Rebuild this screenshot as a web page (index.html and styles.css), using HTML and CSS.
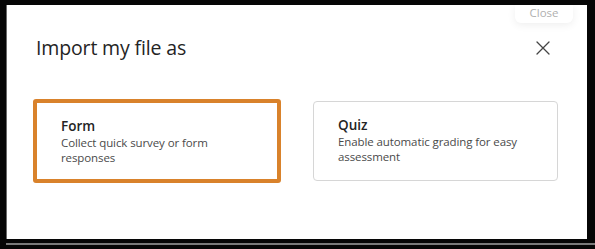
FILE: index.html
```html
<!DOCTYPE html>
<html lang="en">
<head>
<meta charset="utf-8">
<title>Import my file as</title>
<link rel="stylesheet" href="styles.css">
</head>
<body>
<div class="screen">
  <div class="dialog">
    <div class="tooltip">Close</div>
    <div class="header">
      <h1 class="title">Import my file as</h1>
      <button class="close" aria-label="Close">
        <svg width="14" height="14" viewBox="0 0 14 14" aria-hidden="true">
          <path d="M1 1 L13 13 M13 1 L1 13" stroke="#454545" stroke-width="1.3" fill="none" stroke-linecap="round"/>
        </svg>
      </button>
    </div>
    <div class="cards">
      <div class="card card-selected">
        <div class="card-title">Form</div>
        <div class="card-desc">Collect quick survey or form responses</div>
      </div>
      <div class="card">
        <div class="card-title">Quiz</div>
        <div class="card-desc">Enable automatic grading for easy assessment</div>
      </div>
    </div>
  </div>
  <div class="bottom-line"></div>
</div>
</body>
</html>
```

FILE: styles.css
```css
html, body {
  margin: 0;
  padding: 0;
}
body {
  width: 595px;
  height: 249px;
  overflow: hidden;
  background: #060606;
  font-family: "Open Sans", "Noto Sans", sans-serif;
}
.screen {
  padding: 5px 0 0 6px;
}
.dialog {
  position: relative;
  width: 581px;
  height: 234px;
  background: #ffffff;
  overflow: hidden;
  box-shadow: inset 1px 0 0 #6a6a6a;
}
.tooltip {
  position: absolute;
  left: 509px;
  top: 0;
  width: 58px;
  height: 18px;
  border-radius: 0 0 6px 6px;
  background: #fff;
  box-shadow: 0 2px 8px rgba(0,0,0,0.07);
  color: #b0b0b0;
  font-size: 11.5px;
  line-height: 15px;
  text-align: center;
}
.header {
  display: flex;
  align-items: center;
  justify-content: space-between;
  padding: 30px 37px 0 30px;
}
.title {
  margin: 0;
  font-size: 19.5px;
  font-weight: 400;
  line-height: 26px;
  color: #242424;
  letter-spacing: -0.15px;
}
.close {
  border: 0;
  background: transparent;
  padding: 0;
  width: 14px;
  height: 14px;
  display: flex;
}
.cards {
  display: flex;
  align-items: center;
  gap: 32px;
  padding: 38px 0 0 27px;
}
.card {
  box-sizing: border-box;
  width: 245px;
  height: 80px;
  border: 1px solid #d6d6d6;
  border-radius: 4px;
  padding: 14px 20px 0 24px;
}
.card-selected {
  width: 248px;
  height: 84px;
  border: 4px solid #d9822b;
  border-radius: 3px;
  padding-top: 14px;
}
.card-title {
  font-size: 13.5px;
  font-weight: 600;
  line-height: 19px;
  color: #242424;
}
.card-desc {
  font-size: 11.5px;
  line-height: 14.5px;
  color: #4a4a4a;
  letter-spacing: -0.1px;
}
.bottom-line {
  margin-top: 4px;
  height: 2px;
  background: #7a7a7a;
}
```
